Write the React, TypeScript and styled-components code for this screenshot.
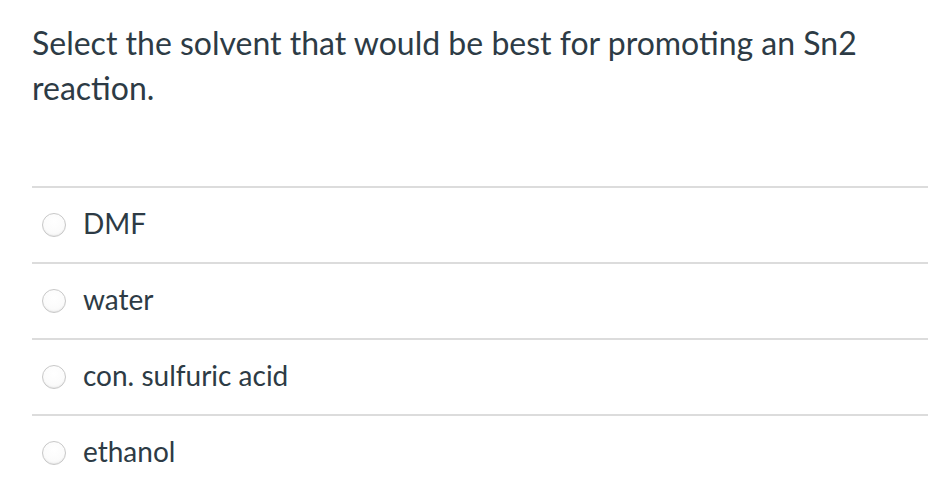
import React from "react";
import styled, { createGlobalStyle } from "styled-components";

const Global = createGlobalStyle`
  html, body { margin: 0; padding: 0; background: #fff; }
  body { font-family: Lato, "Open Sans", sans-serif; color: #2d3b45; }
`;

const Page = styled.div`
  padding: 20px 22px 0 32px;
`;

const Question = styled.div`
  font-size: 32px;
  line-height: 45px;
  margin: 0 0 76px 0;
`;

const Answers = styled.div`
  display: flex;
  flex-direction: column;
`;

const Row = styled.label`
  display: flex;
  align-items: center;
  gap: 17px;
  height: 74px;
  box-sizing: content-box;
  border-top: 2px solid #dcdcdc;
  padding-left: 10px;
  font-size: 28px;
`;

const Radio = styled.span`
  width: 22px;
  height: 22px;
  margin-bottom: 1px;
  border-radius: 50%;
  border: 1px solid #c8c8c8;
  background: radial-gradient(circle at 50% 35%, #ffffff 0%, #fbfbfb 60%, #eeeeee 100%);
  box-shadow: inset 0 -1px 1px rgba(0,0,0,0.05);
  flex: none;
`;

const Label = styled.span`
  padding-bottom: 5px;
`;

const options = ["DMF", "water", "con. sulfuric acid", "ethanol"];

export default function App() {
  return (
    <>
      <Global />
      <Page>
        <Question>
          Select the solvent that would be best for promoting an Sn2 reaction.
        </Question>
        <Answers>
          {options.map((o) => (
            <Row key={o}>
              <Radio />
              <Label>{o}</Label>
            </Row>
          ))}
        </Answers>
      </Page>
    </>
  );
}
